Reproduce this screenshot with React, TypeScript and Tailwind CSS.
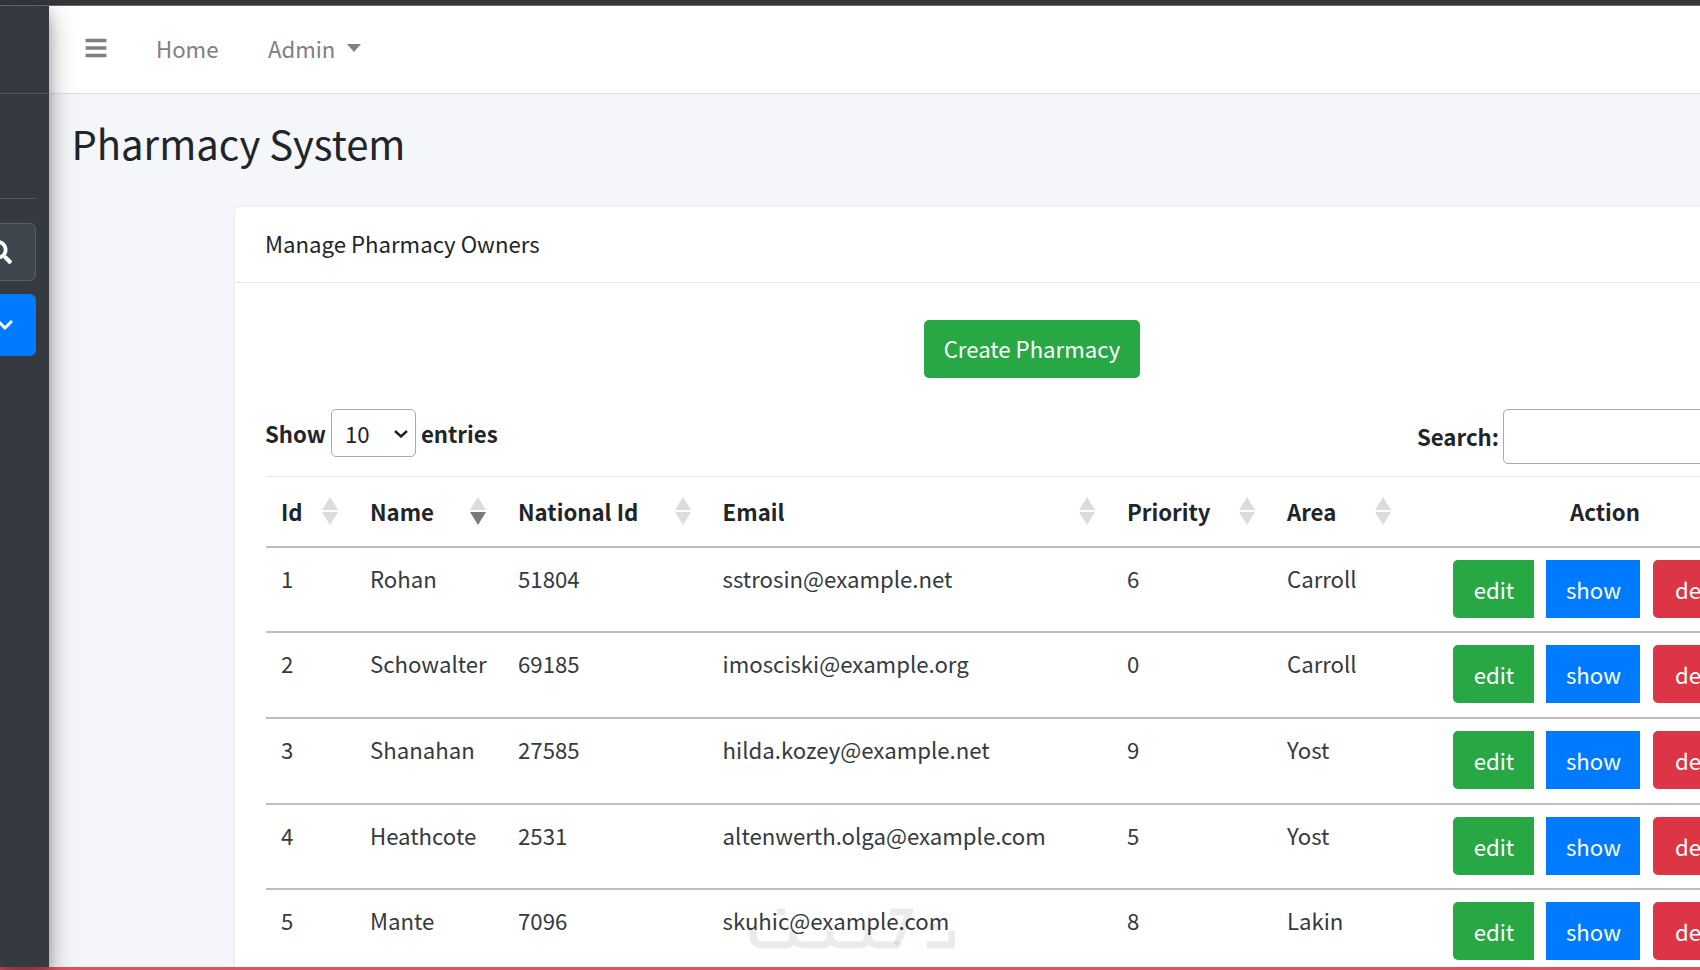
import React from 'react';
import { FaBars, FaChevronDown, FaSearch } from 'react-icons/fa';

const OWNERS = [
  { id: 1, name: 'Rohan', nationalId: '51804', email: 'sstrosin@example.net', priority: 6, area: 'Carroll' },
  { id: 2, name: 'Schowalter', nationalId: '69185', email: 'imosciski@example.org', priority: 0, area: 'Carroll' },
  { id: 3, name: 'Shanahan', nationalId: '27585', email: 'hilda.kozey@example.net', priority: 9, area: 'Yost' },
  { id: 4, name: 'Heathcote', nationalId: '2531', email: 'altenwerth.olga@example.com', priority: 5, area: 'Yost' },
  { id: 5, name: 'Mante', nationalId: '7096', email: 'skuhic@example.com', priority: 8, area: 'Lakin' },
];

const COLUMNS = ['Id', 'Name', 'National Id', 'Email', 'Priority', 'Area'];

function SortArrows({ active }: { active?: boolean }) {
  return (
    <svg width="16" height="28" viewBox="0 0 16 28" className="shrink-0">
      <path d="M8 0 L16 13 H0 Z" fill="#dcdcdc" />
      <path d="M8 28 L16 15 H0 Z" fill={active ? '#7a7a7a' : '#dcdcdc'} />
    </svg>
  );
}

function Watermark() {
  return (
    <svg
      width="206"
      height="44"
      viewBox="0 0 206 44"
      fill="none"
      stroke="#000"
      strokeOpacity="0.08"
      strokeWidth="7"
      className="absolute left-[749px] top-[907px] pointer-events-none"
    >
      <path d="M4 22 V28 Q4 38 14 38 H36 Q44 38 44 28 V24 M44 30 Q46 38 56 38 H72 Q81 38 81 28 V24 M81 30 Q83 38 93 38 H110 Q119 38 119 28 V22 M119 30 Q121 38 130 38 H150" />
      <path d="M141 5 H160 L148 38 M28 5 H36 M178 38 H203 V24 M180 20 H188" />
    </svg>
  );
}

export default function App() {
  return (
    <div className="relative w-[1700px] h-[970px] overflow-hidden flex flex-col text-[22.2px] leading-[36px] text-[#212529] font-['Noto_Sans_CJK_SC','Source_Sans_Pro',sans-serif]">
      <div className="h-[6px] shrink-0 bg-[#35363c] border-b border-[#6b6c70]" />
      <div className="flex flex-1 min-h-0">
        <aside className="relative z-10 w-[48.5px] shrink-0 overflow-hidden bg-[#343a40] shadow-[0_10px_28px_rgba(0,0,0,0.35),0_6px_10px_rgba(0,0,0,0.2)]">
          <div className="h-[88px] border-b border-[#4b545c]" />
          <div className="ml-[-60px] mr-[12.5px] pt-[129.5px]">
            <div className="h-[1px] bg-[#4f5962] mt-[-26px] mb-[24px]" />
            <button className="flex items-center justify-end w-full h-[58px] pr-[23px] rounded-[6px] bg-[#3f474e] border border-[#56606a] text-white">
              <FaSearch size={24} />
            </button>
            <button className="flex items-center justify-end w-full h-[62px] mt-[13px] pr-[22px] rounded-[6px] bg-[#007bff] text-white">
              <FaChevronDown size={18} />
            </button>
          </div>
        </aside>

        <main className="flex-1 min-w-0 flex flex-col bg-[#f4f6f9]">
          <nav className="h-[88px] shrink-0 flex items-center pl-[35.5px] pb-[3px] bg-white border-b-[1.5px] border-[#dee2e6] text-[#808080]">
            <FaBars size={24} />
            <a className="ml-[48px]">Home</a>
            <a className="ml-[49.5px] flex items-center gap-[12px]">
              Admin
              <span className="border-x-[7.5px] border-x-transparent border-t-[8px] border-t-[#808080]" />
            </a>
          </nav>

          <div className="flex-1 min-h-0 overflow-hidden">
            <h1 className="pl-[23px] pt-[16.5px] text-[40px] leading-[64px] font-normal">Pharmacy System</h1>

            <section className="ml-[185.5px] mt-[31.5px] w-[1596px] rounded-[6px] bg-white border border-[#eceef1] shadow-[0_0_2px_rgba(0,0,0,0.08)]">
              <div className="h-[76px] pb-[4px] px-[30px] flex items-center border-b-[1.5px] border-[#e3e6ea]">Manage Pharmacy Owners</div>

              <div className="px-[30px] pt-[37px]">
                <div className="text-center">
                  <button className="w-[216px] h-[58px] pb-[2px] rounded-[5px] bg-[#28a745] text-white">Create Pharmacy</button>
                </div>

                <div className="mt-[31px] flex items-start justify-between font-bold">
                  <label className="flex items-center gap-[5px] h-[48px]">
                    Show
                    <span className="relative flex">
                      <select className="appearance-none w-[85px] h-[48px] pl-[13px] bg-white border border-[#aaa] rounded-[5px] font-normal">
                        <option>10</option>
                        <option>25</option>
                        <option>50</option>
                      </select>
                      <svg width="14" height="8" viewBox="0 0 14 8" fill="none" stroke="#222" strokeWidth="2.4" className="absolute right-[8px] top-[21px] pointer-events-none">
                        <path d="M1 1 L7 6.5 L13 1" />
                      </svg>
                    </span>
                    entries
                  </label>
                  <label className="flex items-center gap-[4px] h-[54px]">
                    Search:
                    <input className="w-[296px] h-[55px] bg-white border border-[#aaa] rounded-[5px]" />
                  </label>
                </div>

                <table className="mt-[13px] ml-[1px] w-[1536px] table-fixed border-collapse">
                  <colgroup>
                    <col className="w-[89px]" />
                    <col className="w-[148px]" />
                    <col className="w-[204.6px]" />
                    <col className="w-[404.4px]" />
                    <col className="w-[160px]" />
                    <col className="w-[136px]" />
                    <col className="w-[394px]" />
                  </colgroup>
                  <thead>
                    <tr className="h-[70px] border-t-[1.5px] border-t-[#e3e6ea] border-b-[2px] border-b-[#bcbfc2]">
                      {COLUMNS.map((col) => (
                        <th key={col} className="pl-[15px] pr-[17px] text-left font-bold">
                          <div className="flex items-center justify-between">
                            {col}
                            <SortArrows active={col === 'Name'} />
                          </div>
                        </th>
                      ))}
                      <th className="text-center font-bold">Action</th>
                    </tr>
                  </thead>
                  <tbody className="text-[#343a40]">
                    {OWNERS.map((o) => (
                      <tr key={o.id} className="h-[85.7px] border-b-[2px] border-b-[#bcbfc2]">
                        <td className="pl-[15px] pt-[12px] align-top">{o.id}</td>
                        <td className="pl-[15px] pt-[12px] align-top">{o.name}</td>
                        <td className="pl-[15px] pt-[12px] align-top">{o.nationalId}</td>
                        <td className="pl-[15px] pt-[12px] align-top">{o.email}</td>
                        <td className="pl-[15px] pt-[12px] align-top">{o.priority}</td>
                        <td className="pl-[15px] pt-[12px] align-top">{o.area}</td>
                        <td className="pl-[45.5px] pt-[12px] align-top">
                          <div className="flex text-white">
                            <button className="w-[81px] h-[58px] rounded-l-[5px] bg-[#28a745]">edit</button>
                            <button className="w-[94px] h-[58px] ml-[12px] bg-[#007bff]">show</button>
                            <button className="w-[108px] h-[58px] ml-[13px] rounded-l-[5px] bg-[#dc3545]">delete</button>
                          </div>
                        </td>
                      </tr>
                    ))}
                  </tbody>
                </table>
              </div>
            </section>
          </div>
        </main>
      </div>
      <div className="h-[3px] shrink-0 bg-[#e8515c]" />
      <Watermark />
    </div>
  );
}
